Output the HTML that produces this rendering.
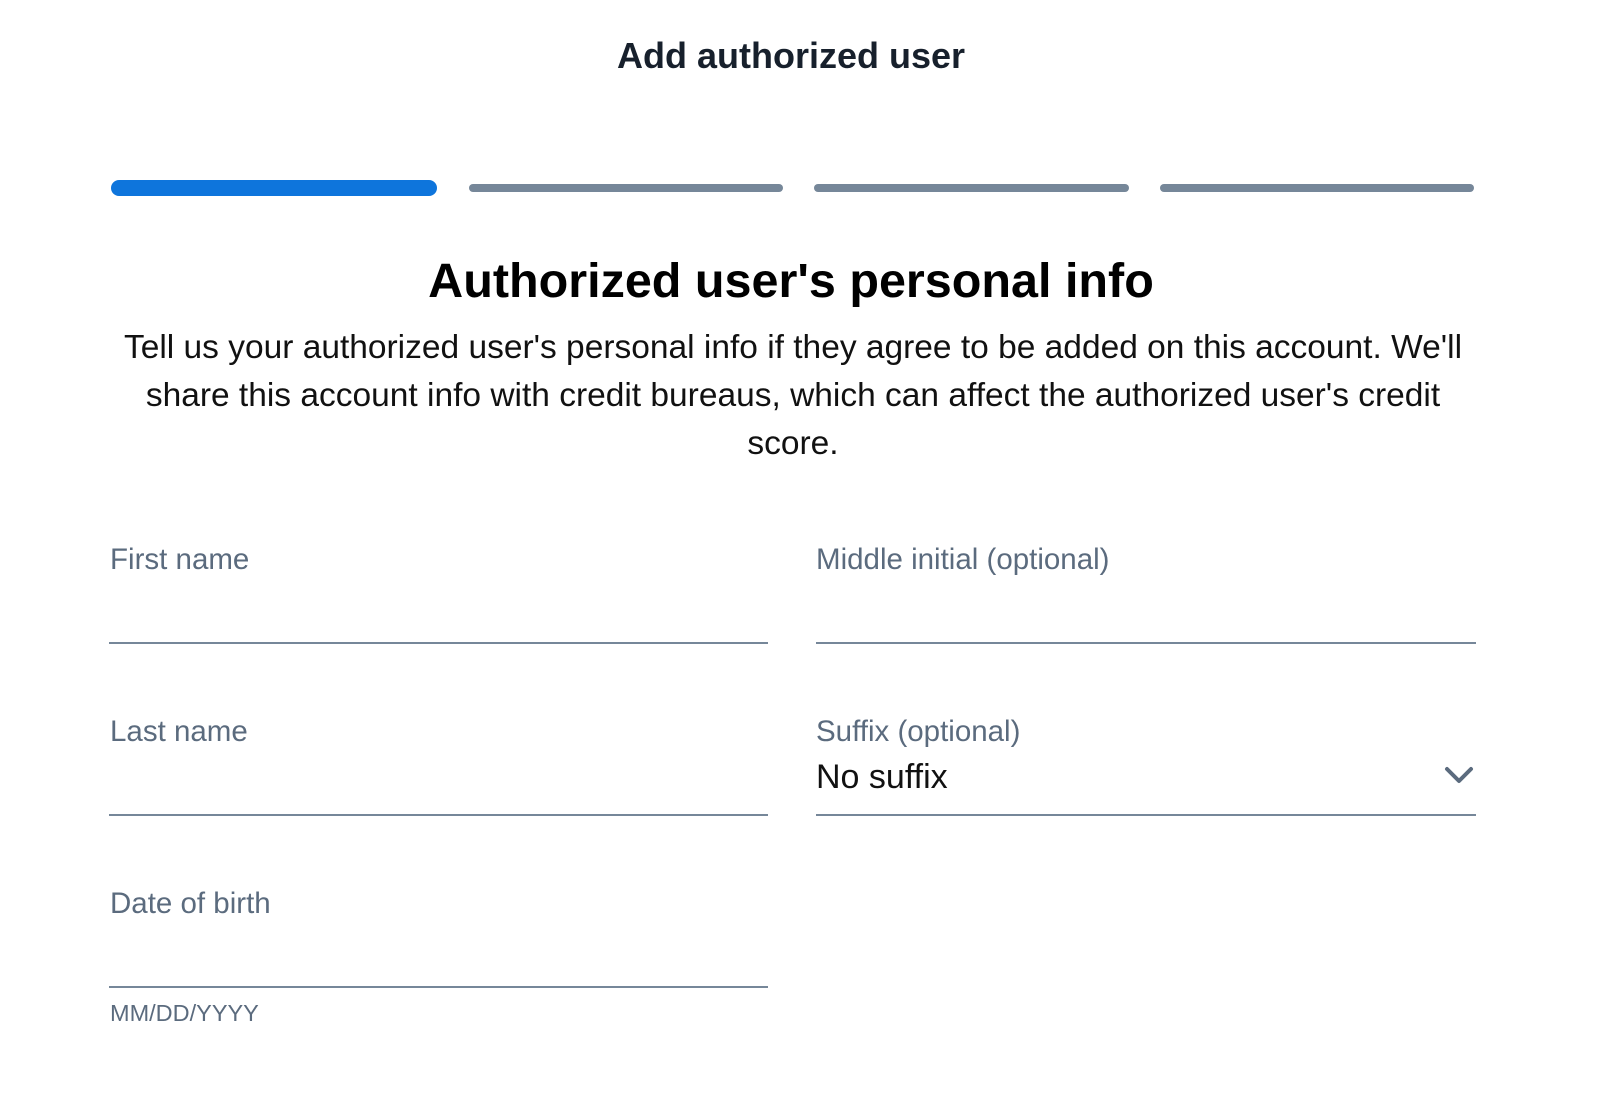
<!DOCTYPE html>
<html><head><meta charset="utf-8"><style>
*{margin:0;padding:0;box-sizing:border-box}
body{width:1610px;height:1110px;background:#fff;font-family:"Liberation Sans",sans-serif;position:relative;overflow:hidden}
.a{position:absolute;white-space:nowrap}
.title{left:0;width:1582px;text-align:center;top:34px;font-size:36px;font-weight:bold;color:#17202c;line-height:44px}
.bar{position:absolute;background:#768799;border-radius:5px;height:8px;top:184px}
.h1{left:0;width:1582px;text-align:center;top:251px;font-size:48.5px;font-weight:bold;color:#000;line-height:60px}
.p{left:110px;width:1366px;text-align:center;top:324px;font-size:33.5px;color:#111;line-height:48px;white-space:normal;position:absolute}
.lab{font-size:29.5px;color:#5b6b7e;line-height:32px}
.line{position:absolute;height:2px;background:#768799}
</style></head><body>
<div class="a title">Add authorized user</div>
<div class="bar" style="left:111px;width:326px;top:180px;height:16px;background:#0e75dc;border-radius:8px"></div>
<div class="bar" style="left:469px;width:314px"></div>
<div class="bar" style="left:814px;width:315px"></div>
<div class="bar" style="left:1160px;width:314px"></div>
<div class="a h1">Authorized user's personal info</div>
<div class="p">Tell us your authorized user's personal info if they agree to be added on this account. We'll share this account info with credit bureaus, which can affect the authorized user's credit score.</div>

<div class="a lab" style="left:110px;top:544px">First name</div>
<div class="line" style="left:109px;width:659px;top:642px"></div>
<div class="a lab" style="left:816px;top:544px">Middle initial (optional)</div>
<div class="line" style="left:816px;width:660px;top:642px"></div>

<div class="a lab" style="left:110px;top:716px">Last name</div>
<div class="line" style="left:109px;width:659px;top:814px"></div>
<div class="a lab" style="left:816px;top:716px">Suffix (optional)</div>
<div class="a" style="left:816px;top:757px;font-size:34px;color:#111;line-height:40px">No suffix</div>
<svg class="a" style="left:1443px;top:765px" width="32" height="22" viewBox="0 0 32 22"><path d="M4 4 L16 16 L28 4" fill="none" stroke="#5b6b7e" stroke-width="4" stroke-linecap="round" stroke-linejoin="round"/></svg>
<div class="line" style="left:816px;width:660px;top:814px"></div>

<div class="a lab" style="left:110px;top:888px">Date of birth</div>
<div class="line" style="left:109px;width:659px;top:986px"></div>
<div class="a" style="left:110px;top:999px;font-size:23.5px;color:#5b6b7e;line-height:28px">MM/DD/YYYY</div>
</body></html>
